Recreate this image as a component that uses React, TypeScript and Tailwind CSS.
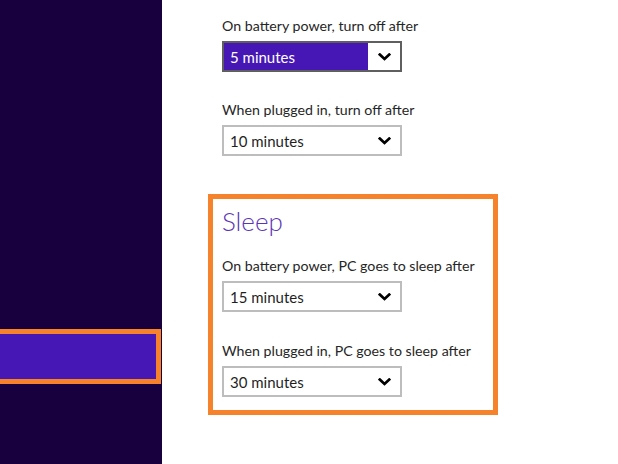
import React from 'react';

const font = { fontFamily: 'Lato, "Open Sans", sans-serif' };

function Chevron() {
  return (
    <svg width="13" height="8" viewBox="0 0 13 8" className="text-black">
      <polyline points="1.8,1.6 6.5,6 11.2,1.6" fill="none" stroke="currentColor" strokeWidth="2.7" strokeLinecap="square" />
    </svg>
  );
}

function Select({ value, active = false }: { value: string; active?: boolean }) {
  return (
    <div
      className={`mt-[5px] flex h-[31px] w-[180px] border-2 ${
        active ? 'border-[#5f5f5f]' : 'border-[#bdbdbd]'
      } bg-white`}
    >
      <div
        className={`flex flex-1 items-center pl-[6px] text-[15px] leading-[20px] ${
          active ? 'bg-[#4617b4] text-white' : 'text-[#1f1f1f]'
        }`}
      >
        {value}
      </div>
      <div className="flex w-[32px] items-center justify-center">
        <Chevron />
      </div>
    </div>
  );
}

function Label({ children, className = '' }: { children: React.ReactNode; className?: string }) {
  return <div className={`text-[14.2px] leading-[20px] text-[#262626] ${className}`}>{children}</div>;
}

export default function App() {
  return (
    <div className="flex h-screen w-full overflow-hidden bg-white" style={font}>
      {/* left nav */}
      <div className="flex w-[162px] shrink-0 flex-col bg-[#18003f] pt-[329px]">
        <div className="h-[55px] w-[161px] border-y-[5px] border-r-[5px] border-[#f6822b] bg-[#4617b4]" />
      </div>

      {/* settings */}
      <div className="flex flex-col pl-[60px] pt-[16px]">
        <Label>On battery power, turn off after</Label>
        <Select value="5 minutes" active />

        <Label className="mt-[28px]">When plugged in, turn off after</Label>
        <Select value="10 minutes" />

        <div className="-ml-[14px] mt-[38px] flex w-[290px] flex-col border-[5px] border-[#f6822b] pb-[13px] pl-[9px] pt-[6px]">
          <h2 className="text-[26px] font-light leading-[32px] text-[#5b34b8]">Sleep</h2>
          <Label className="mt-[19px]">On battery power, PC goes to sleep after</Label>
          <Select value="15 minutes" />
          <Label className="mt-[29px]">When plugged in, PC goes to sleep after</Label>
          <Select value="30 minutes" />
        </div>
      </div>
    </div>
  );
}
